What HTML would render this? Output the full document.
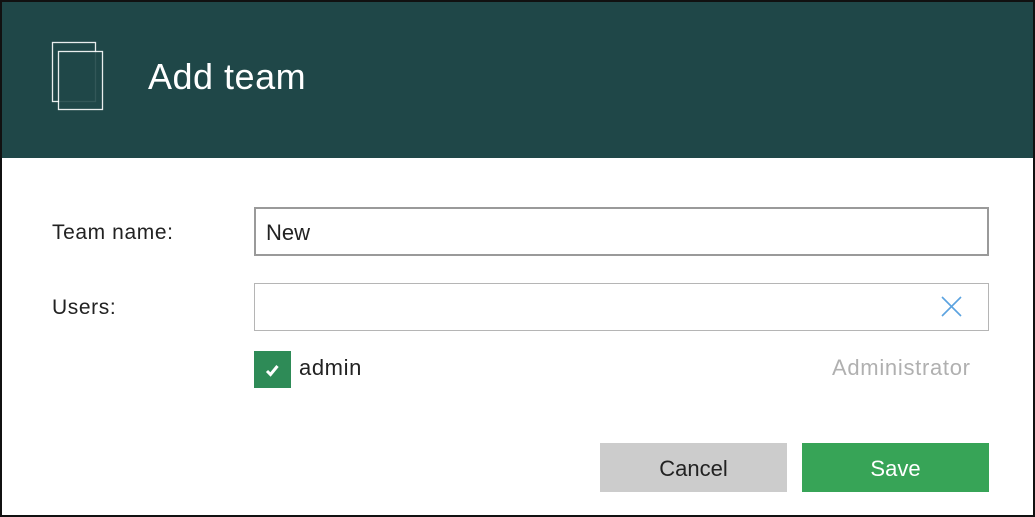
<!DOCTYPE html>
<html><head><style>
*{margin:0;padding:0;box-sizing:border-box}
body{width:1035px;height:517px;background:#fff;font-family:"Segoe UI","Liberation Sans",sans-serif;position:relative;overflow:hidden}
.frame{position:absolute;left:0;top:0;width:1035px;height:517px;border:2px solid #111;}
.hdr{position:absolute;left:2px;top:2px;width:1031px;height:156px;background:#1f4748}
.t{position:absolute;left:148px;top:55px;color:#fff;font-size:36px;line-height:44px;letter-spacing:0.5px}
.lbl{position:absolute;left:52px;font-size:21px;letter-spacing:0.6px;color:#222}
.box{position:absolute;left:254px;width:735px;background:#fff}
.btn{position:absolute;top:443px;width:187px;height:49px;font-size:22px;text-align:center;line-height:51px}
</style></head><body>
<div class="hdr"></div>
<svg style="position:absolute;left:0;top:0" width="120" height="120">
<rect x="52.5" y="42.5" width="43" height="59" fill="none" stroke="#fff" stroke-width="1.3" opacity=".9"/>
<rect x="58.5" y="51.5" width="44" height="58" fill="#1f4748" stroke="#fff" stroke-width="1.3" opacity=".9"/>
</svg>
<div class="t">Add team</div>
<div class="lbl" style="top:221px">Team name:</div>
<div class="lbl" style="top:296px">Users:</div>
<div class="box" style="top:207px;height:49px;border:2px solid #9a9a9a;"><span style="position:absolute;left:10px;top:11px;font-size:22px;color:#222">New</span></div>
<div class="box" style="top:283px;height:48px;border:1px solid #b5b5b5;"></div>
<svg style="position:absolute;left:940px;top:295px" width="24" height="24"><path d="M2 2L21 21M21 2L2 21" stroke="#5ba3e0" stroke-width="1.6"/></svg>
<div style="position:absolute;left:254px;top:351px;width:37px;height:37px;background:#2e8b57"></div>
<svg style="position:absolute;left:254px;top:351px" width="37" height="37"><path d="M13 20L16.5 23.5L23.5 15" fill="none" stroke="#fff" stroke-width="3"/></svg>
<div style="position:absolute;left:299px;top:355px;font-size:22px;letter-spacing:0.6px;color:#222">admin</div>
<div style="position:absolute;left:832px;top:355px;font-size:22px;letter-spacing:0.7px;color:#b0b0b0">Administrator</div>
<div class="btn" style="left:600px;background:#cccccc;color:#222">Cancel</div>
<div class="btn" style="left:802px;background:#37a457;color:#fff">Save</div>
<div class="frame"></div>
</body></html>
